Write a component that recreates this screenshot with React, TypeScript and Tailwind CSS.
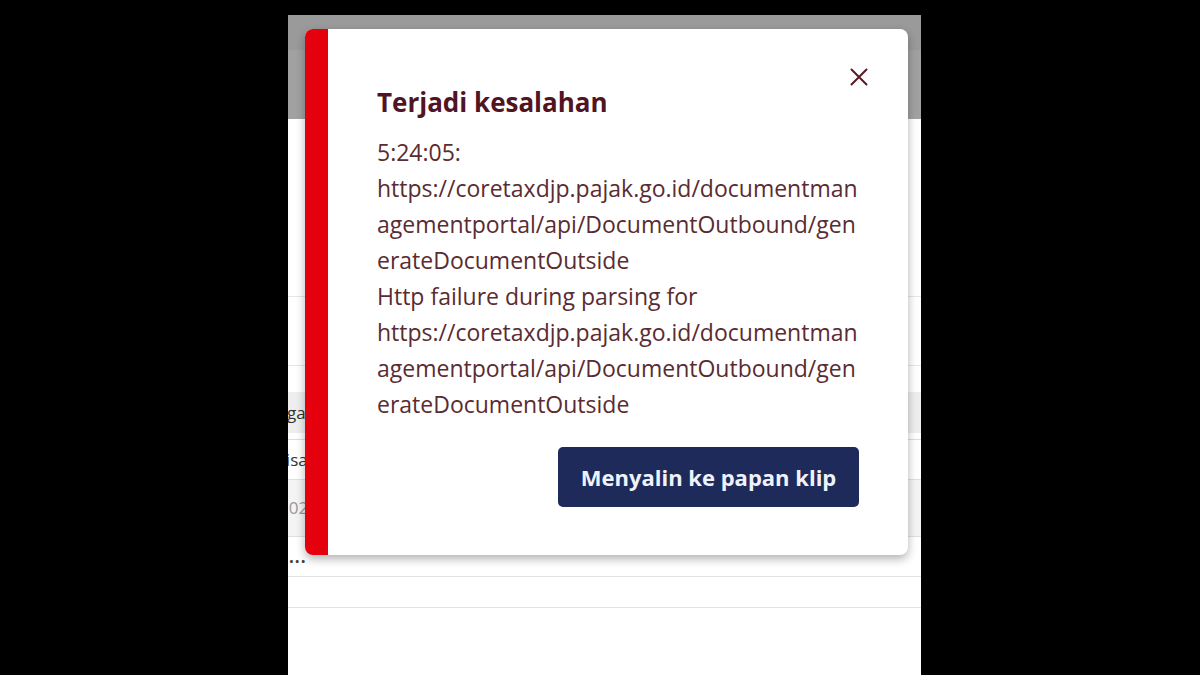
const ERROR_URL =
  'https://coretaxdjp.pajak.go.id/documentmanagementportal/api/DocumentOutbound/generateDocumentOutside';

function PageBehind() {
  return (
    <div className="flex flex-col text-[17px] text-[#333]">
      <div className="h-[35px] bg-[#9a9a9a]" />
      <div className="h-[69px] bg-[#a1a1a1]" />
      <div className="h-[178px] border-b border-[#e6e6e6]" />
      <div className="h-[69px] border-b border-[#e6e6e6]" />
      <div className="h-[26px]" />
      <div className="h-[41px] bg-[#eeeeee] flex items-center">
        <span className="-ml-[30px]">Harga</span>
      </div>
      <div className="h-[7px] border-b border-[#dcdcdc]" />
      <div className="h-[40px] border-b border-[#e0e0e0] flex items-center">
        <span className="-ml-[28px]">Terisa</span>
      </div>
      <div className="h-[57px] bg-[#f4f4f4] border-b border-[#e0e0e0] flex items-center text-[#999]">
        <span className="-ml-[9px]">2029</span>
      </div>
      <div className="h-[40px] border-b border-[#e2e2e2] flex items-center font-bold text-[#444]">
        <span className="ml-[1px] tracking-[1px]">...</span>
      </div>
      <div className="h-[31px] border-b border-[#e2e2e2]" />
    </div>
  );
}

function ErrorDialog() {
  return (
    <div className="absolute left-[17px] top-[14px] w-[603px] h-[526px] flex rounded-[8px] bg-white overflow-hidden shadow-[0_4px_10px_rgba(0,0,0,0.3)]">
      <div className="w-[23px] bg-[#e5000e]" />
      <div className="relative flex-1 flex flex-col pl-[49px] pt-[57px]">
        <button className="absolute right-[40px] top-[39px] w-[18px] h-[18px]">
          <svg viewBox="0 0 18 18" className="w-[18px] h-[18px]" fill="none" stroke="#5a1a26" strokeWidth="2" strokeLinecap="round">
            <path d="M1.5 1.5l15 15M16.5 1.5l-15 15" />
          </svg>
        </button>
        <h2 className="text-[26px] leading-[32px] font-bold text-[#511422]">Terjadi kesalahan</h2>
        <div className="mt-[16px] w-[486px] text-[23px] leading-[36px] text-[#5a2c31] break-words">
          <p>5:24:05: {ERROR_URL}</p>
          <p>Http failure during parsing for {ERROR_URL}</p>
        </div>
        <div className="mt-[25px] w-[482px] flex justify-end">
          <button className="w-[301px] h-[60px] rounded-[5px] bg-[#1e2a5a] text-[22px] font-bold text-[#eef2fa]">
            Menyalin ke papan klip
          </button>
        </div>
      </div>
    </div>
  );
}

export default function App() {
  return (
    <div
      className="w-[1200px] h-[675px] bg-black flex pl-[288px] pt-[15px]"
      style={{ fontFamily: '"Open Sans", "Noto Sans", sans-serif' }}
    >
      <div className="relative w-[633px] h-[660px] bg-white overflow-hidden">
        <PageBehind />
        <ErrorDialog />
      </div>
    </div>
  );
}
